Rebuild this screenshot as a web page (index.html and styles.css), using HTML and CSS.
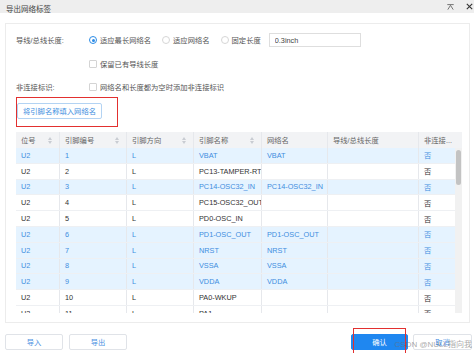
FILE: index.html
```html
<!DOCTYPE html>
<html lang="zh-CN">
<head>
    <meta charset="UTF-8">
    <meta name="viewport" content="width=device-width, initial-scale=1.0">
    <title>导出网络标签</title>
    <link rel="stylesheet" href="styles.css">
</head>
<body>
    <div class="dialog">
        <div class="titlebar">
            <span class="title">导出网络标签</span>
            <span class="title-tools">
                <svg class="tool-icon" width="7" height="6" viewBox="0 0 7 6"><path d="M0.3 0.6H6.7M3.5 1.3L0.8 5.6M3.5 1.3L6.2 5.6" stroke="#666" stroke-width="0.9" fill="none"/></svg>
                <svg class="tool-icon" width="7" height="7" viewBox="0 0 7 7"><path d="M0.8 0.8L6.2 6.2M6.2 0.8L0.8 6.2" stroke="#333" stroke-width="1.1" fill="none"/></svg>
            </span>
        </div>

        <div class="panel">
            <div class="form-row">
                <span class="form-label">导线/总线长度:</span>
                <label class="radio checked"><span class="radio-dot"></span>适应最长网络名</label>
                <label class="radio"><span class="radio-dot"></span>适应网络名</label>
                <label class="radio last"><span class="radio-dot"></span>固定长度</label>
                <input type="text" class="text-input" value="0.3inch">
            </div>
            <div class="form-row indent">
                <label class="check"><span class="check-box"></span>保留已有导线长度</label>
            </div>
            <div class="form-row">
                <span class="form-label">非连接标识:</span>
                <label class="check"><span class="check-box"></span>网络名和长度都为空时添加非连接标识</label>
            </div>

            <div class="fill-row">
                <button type="button" class="fill-btn annotated">将引脚名称填入网络名</button>
            </div>

            <div class="table">
                <div class="thead">
                    <div class="th c1">位号<span class="sort"></span></div>
                    <div class="th c2">引脚编号<span class="sort"></span></div>
                    <div class="th c3">引脚方向<span class="sort"></span></div>
                    <div class="th c4">引脚名称<span class="sort"></span></div>
                    <div class="th c5">网络名</div>
                    <div class="th c6">导线/总线长度</div>
                    <div class="th c7 last">非连接...</div>
                </div>
                <div class="tbody">
                    <div class="rows">
                        <div class="tr hl"><div class="td c1">U2</div><div class="td c2">1</div><div class="td c3">L</div><div class="td c4">VBAT</div><div class="td c5">VBAT</div><div class="td c6"></div><div class="td c7">否</div></div>
                        <div class="tr"><div class="td c1">U2</div><div class="td c2">2</div><div class="td c3">L</div><div class="td c4">PC13-TAMPER-RT</div><div class="td c5"></div><div class="td c6"></div><div class="td c7">否</div></div>
                        <div class="tr hl"><div class="td c1">U2</div><div class="td c2">3</div><div class="td c3">L</div><div class="td c4">PC14-OSC32_IN</div><div class="td c5">PC14-OSC32_IN</div><div class="td c6"></div><div class="td c7">否</div></div>
                        <div class="tr"><div class="td c1">U2</div><div class="td c2">4</div><div class="td c3">L</div><div class="td c4">PC15-OSC32_OUT</div><div class="td c5"></div><div class="td c6"></div><div class="td c7">否</div></div>
                        <div class="tr"><div class="td c1">U2</div><div class="td c2">5</div><div class="td c3">L</div><div class="td c4">PD0-OSC_IN</div><div class="td c5"></div><div class="td c6"></div><div class="td c7">否</div></div>
                        <div class="tr hl"><div class="td c1">U2</div><div class="td c2">6</div><div class="td c3">L</div><div class="td c4">PD1-OSC_OUT</div><div class="td c5">PD1-OSC_OUT</div><div class="td c6"></div><div class="td c7">否</div></div>
                        <div class="tr hl"><div class="td c1">U2</div><div class="td c2">7</div><div class="td c3">L</div><div class="td c4">NRST</div><div class="td c5">NRST</div><div class="td c6"></div><div class="td c7">否</div></div>
                        <div class="tr hl"><div class="td c1">U2</div><div class="td c2">8</div><div class="td c3">L</div><div class="td c4">VSSA</div><div class="td c5">VSSA</div><div class="td c6"></div><div class="td c7">否</div></div>
                        <div class="tr hl"><div class="td c1">U2</div><div class="td c2">9</div><div class="td c3">L</div><div class="td c4">VDDA</div><div class="td c5">VDDA</div><div class="td c6"></div><div class="td c7">否</div></div>
                        <div class="tr"><div class="td c1">U2</div><div class="td c2">10</div><div class="td c3">L</div><div class="td c4">PA0-WKUP</div><div class="td c5"></div><div class="td c6"></div><div class="td c7">否</div></div>
                        <div class="tr"><div class="td c1">U2</div><div class="td c2">11</div><div class="td c3">L</div><div class="td c4">PA1</div><div class="td c5"></div><div class="td c6"></div><div class="td c7">否</div></div>
                    </div>
                    <div class="scrollbar"><div class="scroll-thumb"></div></div>
                </div>
            </div>
        </div>

        <div class="footer">
            <div class="btn-group">
                <button type="button" class="btn">导入</button>
                <button type="button" class="btn">导出</button>
            </div>
            <div class="btn-group right">
                <button type="button" class="btn btn-primary annotated">确认</button>
                <button type="button" class="btn btn-cancel">取消</button>
            </div>
        </div>

        <div class="watermark">CSDN @NULL指向我</div>
    </div>
</body>
</html>
```

FILE: styles.css
```css
* {
    box-sizing: border-box;
}

body {
    margin: 0;
    width: 474px;
    height: 353px;
    overflow: hidden;
    background-color: #fff;
    font-family: "Liberation Sans", "Noto Sans CJK SC", sans-serif;
    font-size: 7.3px;
    color: #333;
}

.dialog {
    position: relative;
    height: 353px;
}

/* title bar */
.titlebar {
    height: 13px;
    background-color: #eeeeee;
    display: flex;
    align-items: center;
    padding: 0 1px 0 6px;
}

.title {
    font-size: 7.5px;
    color: #444;
    padding-top: 3px;
}

.title-tools {
    margin-left: auto;
    display: flex;
    align-items: center;
    gap: 12px;
}

.tool-icon {
    display: block;
}

/* settings panel */
.panel {
    margin: 10px 4px 0 5px;
    height: 300px;
    border: 1px solid #ececec;
    padding: 9px 7px 0 10px;
}

.form-row {
    display: flex;
    align-items: center;
    height: 14px;
    color: #555;
}

.form-row + .form-row {
    margin-top: 9.5px;
}

.form-row.indent {
    padding-left: 73px;
}

.form-label {
    width: 73px;
    flex-shrink: 0;
}

.radio, .check {
    display: flex;
    align-items: center;
    white-space: nowrap;
}

.radio {
    margin-right: 11px;
}

.radio.last {
    margin-right: 8px;
}

.radio-dot {
    width: 8px;
    height: 8px;
    border: 1px solid #d6d6d6;
    border-radius: 50%;
    margin-right: 3px;
    display: flex;
    justify-content: center;
    align-items: center;
}

.radio.checked .radio-dot {
    border-color: #2b8be6;
}

.radio.checked .radio-dot::after {
    content: "";
    width: 3px;
    height: 3px;
    border-radius: 50%;
    background-color: #2b8be6;
}

.check-box {
    width: 8px;
    height: 8px;
    border: 1px solid #d4d4d4;
    border-radius: 1px;
    margin-right: 3px;
}

.text-input {
    width: 92px;
    height: 14px;
    border: 1px solid #dedede;
    padding: 0 5px;
    font-family: inherit;
    font-size: 7.3px;
    color: #444;
    outline: none;
}

.fill-row {
    margin-top: 9px;
    height: 16px;
}

.fill-btn {
    position: relative;
    margin-left: 1px;
    width: 85px;
    height: 16px;
    padding: 0;
    background-color: #fff;
    border: 1px solid #b3d3f3;
    border-radius: 2px;
    color: #3f8ee0;
    font-family: inherit;
    font-size: 7.3px;
}

/* red annotation boxes drawn over the buttons */
.annotated::after {
    content: "";
    position: absolute;
    border: 1.5px solid #e2302f;
}

.fill-btn.annotated::after {
    left: -2px;
    top: -7px;
    right: -17px;
    bottom: -9px;
}

.btn-primary.annotated::after {
    left: 1px;
    top: -7px;
    right: 1px;
    bottom: -6px;
}

/* table */
.table {
    margin-top: 13px;
}

.thead {
    display: flex;
    height: 16px;
    background-color: #f2f3f5;
    color: #666;
}

.th, .td {
    flex-shrink: 0;
    padding: 0 5px;
    white-space: nowrap;
    overflow: hidden;
    border-right: 1px solid #e6e8ec;
    display: flex;
    align-items: center;
}

.th {
    justify-content: space-between;
    padding-right: 7px;
}

.th.last, .td.c7 {
    border-right: none;
}

.c1 { width: 44px; }
.c2 { width: 67px; }
.c3 { width: 67px; }
.c4 { width: 68px; }
.c5 { width: 66px; }
.c6 { width: 91px; }
.c7 { width: 36px; }
.th.c7 { width: 43px; }

.sort {
    display: flex;
    flex-direction: column;
    gap: 1px;
}

.sort::before, .sort::after {
    content: "";
    border-left: 2.5px solid transparent;
    border-right: 2.5px solid transparent;
}

.sort::before {
    border-bottom: 3px solid #c9ccd2;
}

.sort::after {
    border-top: 3px solid #c9ccd2;
}

.tbody {
    display: flex;
    height: 165px;
}

.rows {
    width: 439px;
    overflow: hidden;
}

.tr {
    display: flex;
    height: 15.8px;
    border-bottom: 1px solid #eef0f3;
    background-color: #fff;
    color: #333;
}

.tr.hl {
    background-color: #e5f3ff;
    color: #3f8ee0;
}

.scrollbar {
    width: 7px;
    background-color: #f1f1f1;
    padding: 2px 1px;
}

.scroll-thumb {
    height: 35px;
    border-radius: 3px;
    background-color: #c3c3c3;
}

/* footer buttons */
.footer {
    display: flex;
    justify-content: space-between;
    margin-top: 11px;
    padding: 0 2px 0 5px;
}

.btn-group {
    display: flex;
    gap: 6px;
}

.btn-group.right {
    gap: 5px;
}

.btn {
    position: relative;
    width: 58px;
    height: 16px;
    padding: 0;
    background-color: #fff;
    border: 1px solid #e0e3e8;
    border-radius: 2px;
    color: #4a90e2;
    font-family: inherit;
    font-size: 7.3px;
}

.btn-primary {
    width: 57px;
    background-color: #1f87f0;
    border-color: #1f87f0;
    color: #fff;
}

.btn-cancel {
    width: 59px;
}

.watermark {
    position: absolute;
    right: 2px;
    bottom: 4px;
    font-size: 8px;
    color: rgba(110, 110, 110, 0.6);
    white-space: nowrap;
}
```
